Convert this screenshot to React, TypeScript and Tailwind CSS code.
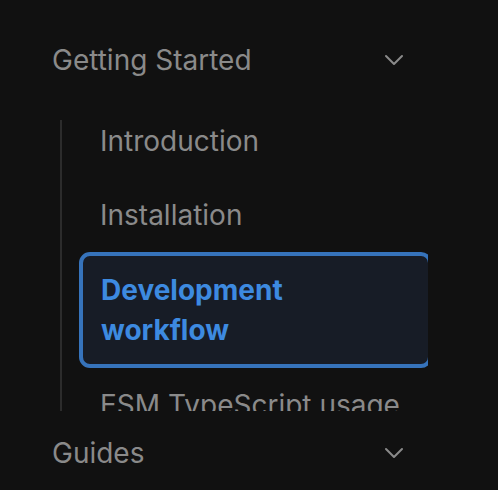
import React from 'react';

function Chevron() {
  return (
    <svg width="20" height="12" viewBox="0 0 20 12" fill="none" className="text-[#8a8a8a]">
      <polyline points="2,2 10,10 18,2" stroke="currentColor" strokeWidth="2" strokeLinecap="round" strokeLinejoin="round" />
    </svg>
  );
}

function SectionHeader({ title }: { title: string }) {
  return (
    <div className="ml-[52px] w-[352px] h-10 flex items-center justify-between">
      <span className="text-[28px] leading-10 text-[#8a8a8a]">{title}</span>
      <Chevron />
    </div>
  );
}

export default function App() {
  return (
    <div className="h-[490px] w-full bg-[#111111] overflow-hidden pt-10" style={{ fontFamily: 'Inter, "Noto Sans", sans-serif' }}>
      <SectionHeader title="Getting Started" />

      {/* Sub pages */}
      <div className="mt-10 ml-[60px] w-[368px] h-[291px] border-l-2 border-[#2c2c2c] overflow-hidden">
        <div className="pt-px">
          <div className="pl-[38px] pb-[17px] text-[28px] leading-10 text-[#8a8a8a]">Introduction</div>
          <div className="pl-[38px] py-[17px] text-[28px] leading-10 text-[#8a8a8a]">Installation</div>
          <div className="ml-[17px] w-[353px] shrink-0 border-4 border-[#3673bb] rounded-[11px] bg-[#171c26] px-[18px] py-[14px]">
            <span className="block text-[28px] leading-10 font-bold text-[#3d8ae0] w-[240px]">Development workflow</span>
          </div>
          <div className="pl-[38px] pt-[17px] text-[28px] leading-10 text-[#8a8a8a] whitespace-nowrap">ESM TypeScript usage</div>
        </div>
      </div>

      <div className="mt-[22px]">
        <SectionHeader title="Guides" />
      </div>
    </div>
  );
}
